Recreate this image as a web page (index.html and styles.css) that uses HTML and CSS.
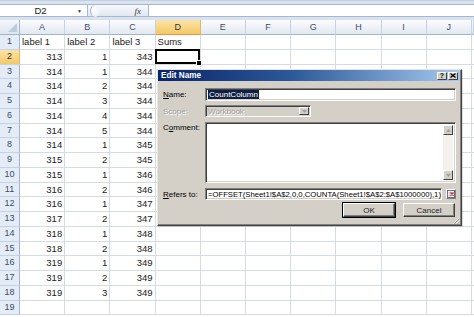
FILE: index.html
```html
<!DOCTYPE html>
<html>
<head>
<meta charset="utf-8">
<link rel="stylesheet" href="styles.css">
</head>
<body>
<div class="app">
  <div class="fbar">
    <div class="namebox"><span class="ref">D2</span><span class="dd">&#9660;</span></div>
    <div class="fxarea"><span class="knob"></span><span class="fx">fx</span></div>
    <div class="finput"></div>
  </div>
  <div class="sheet">
    <div class="row hdr"><div class="corner"><span class="tri"></span></div><div class="ch">A</div><div class="ch">B</div><div class="ch">C</div><div class="ch sel">D</div><div class="ch">E</div><div class="ch">F</div><div class="ch">G</div><div class="ch">H</div><div class="ch">I</div><div class="ch">J</div><div class="ch"></div></div>
    <div class="row"><div class="rh">1</div><div class="c">label 1</div><div class="c">label 2</div><div class="c">label 3</div><div class="c">Sums</div><div class="c"></div><div class="c"></div><div class="c"></div><div class="c"></div><div class="c"></div><div class="c"></div><div class="c"></div></div>
    <div class="row"><div class="rh sel">2</div><div class="c n">313</div><div class="c n">1</div><div class="c n">343</div><div class="c active"></div><div class="c"></div><div class="c"></div><div class="c"></div><div class="c"></div><div class="c"></div><div class="c"></div><div class="c"></div></div>
    <div class="row"><div class="rh">3</div><div class="c n">314</div><div class="c n">1</div><div class="c n">344</div><div class="c"></div><div class="c"></div><div class="c"></div><div class="c"></div><div class="c"></div><div class="c"></div><div class="c"></div><div class="c"></div></div>
    <div class="row"><div class="rh">4</div><div class="c n">314</div><div class="c n">2</div><div class="c n">344</div><div class="c"></div><div class="c"></div><div class="c"></div><div class="c"></div><div class="c"></div><div class="c"></div><div class="c"></div><div class="c"></div></div>
    <div class="row"><div class="rh">5</div><div class="c n">314</div><div class="c n">3</div><div class="c n">344</div><div class="c"></div><div class="c"></div><div class="c"></div><div class="c"></div><div class="c"></div><div class="c"></div><div class="c"></div><div class="c"></div></div>
    <div class="row"><div class="rh">6</div><div class="c n">314</div><div class="c n">4</div><div class="c n">344</div><div class="c"></div><div class="c"></div><div class="c"></div><div class="c"></div><div class="c"></div><div class="c"></div><div class="c"></div><div class="c"></div></div>
    <div class="row"><div class="rh">7</div><div class="c n">314</div><div class="c n">5</div><div class="c n">344</div><div class="c"></div><div class="c"></div><div class="c"></div><div class="c"></div><div class="c"></div><div class="c"></div><div class="c"></div><div class="c"></div></div>
    <div class="row"><div class="rh">8</div><div class="c n">314</div><div class="c n">1</div><div class="c n">345</div><div class="c"></div><div class="c"></div><div class="c"></div><div class="c"></div><div class="c"></div><div class="c"></div><div class="c"></div><div class="c"></div></div>
    <div class="row"><div class="rh">9</div><div class="c n">315</div><div class="c n">2</div><div class="c n">345</div><div class="c"></div><div class="c"></div><div class="c"></div><div class="c"></div><div class="c"></div><div class="c"></div><div class="c"></div><div class="c"></div></div>
    <div class="row"><div class="rh">10</div><div class="c n">315</div><div class="c n">1</div><div class="c n">346</div><div class="c"></div><div class="c"></div><div class="c"></div><div class="c"></div><div class="c"></div><div class="c"></div><div class="c"></div><div class="c"></div></div>
    <div class="row"><div class="rh">11</div><div class="c n">316</div><div class="c n">2</div><div class="c n">346</div><div class="c"></div><div class="c"></div><div class="c"></div><div class="c"></div><div class="c"></div><div class="c"></div><div class="c"></div><div class="c"></div></div>
    <div class="row"><div class="rh">12</div><div class="c n">316</div><div class="c n">1</div><div class="c n">347</div><div class="c"></div><div class="c"></div><div class="c"></div><div class="c"></div><div class="c"></div><div class="c"></div><div class="c"></div><div class="c"></div></div>
    <div class="row"><div class="rh">13</div><div class="c n">317</div><div class="c n">2</div><div class="c n">347</div><div class="c"></div><div class="c"></div><div class="c"></div><div class="c"></div><div class="c"></div><div class="c"></div><div class="c"></div><div class="c"></div></div>
    <div class="row"><div class="rh">14</div><div class="c n">318</div><div class="c n">1</div><div class="c n">348</div><div class="c"></div><div class="c"></div><div class="c"></div><div class="c"></div><div class="c"></div><div class="c"></div><div class="c"></div><div class="c"></div></div>
    <div class="row"><div class="rh">15</div><div class="c n">318</div><div class="c n">2</div><div class="c n">348</div><div class="c"></div><div class="c"></div><div class="c"></div><div class="c"></div><div class="c"></div><div class="c"></div><div class="c"></div><div class="c"></div></div>
    <div class="row"><div class="rh">16</div><div class="c n">319</div><div class="c n">1</div><div class="c n">349</div><div class="c"></div><div class="c"></div><div class="c"></div><div class="c"></div><div class="c"></div><div class="c"></div><div class="c"></div><div class="c"></div></div>
    <div class="row"><div class="rh">17</div><div class="c n">319</div><div class="c n">2</div><div class="c n">349</div><div class="c"></div><div class="c"></div><div class="c"></div><div class="c"></div><div class="c"></div><div class="c"></div><div class="c"></div><div class="c"></div></div>
    <div class="row"><div class="rh">18</div><div class="c n">319</div><div class="c n">3</div><div class="c n">349</div><div class="c"></div><div class="c"></div><div class="c"></div><div class="c"></div><div class="c"></div><div class="c"></div><div class="c"></div><div class="c"></div></div>
    <div class="row"><div class="rh">19</div><div class="c"></div><div class="c"></div><div class="c"></div><div class="c"></div><div class="c"></div><div class="c"></div><div class="c"></div><div class="c"></div><div class="c"></div><div class="c"></div><div class="c"></div></div>
  </div>

  <div class="dialog">
    <div class="title">
      <span class="ttext">Edit Name</span>
      <span class="tbtn help">?</span>
      <span class="tbtn close"><svg width="6" height="5" viewBox="0 0 6 5"><path d="M0.5 0.5L5.5 4.5M5.5 0.5L0.5 4.5" stroke="#000" stroke-width="1.3"/></svg></span>
    </div>
    <div class="body">
      <div class="frow r-name">
        <span class="lbl"><u>N</u>ame:</span>
        <div class="input name"><span class="hl">CountColumn</span></div>
      </div>
      <div class="frow r-scope">
        <span class="lbl dis">Scope:</span>
        <div class="input scope"><span class="distext">Workbook</span><span class="ddbtn"><svg width="5" height="3" viewBox="0 0 5 3"><path d="M0 0H5L2.5 3Z" fill="#a0a0a0"/></svg></span></div>
      </div>
      <div class="frow r-comment">
        <span class="lbl top">C<u>o</u>mment:</span>
        <div class="input comment">
          <div class="carea"></div>
          <div class="vscroll">
            <span class="sbtn"><svg width="5" height="3" viewBox="0 0 5 3"><path d="M0 3H5L2.5 0Z" fill="#a0a0a0"/></svg></span>
            <span class="strack"></span>
            <span class="sbtn"><svg width="5" height="3" viewBox="0 0 5 3"><path d="M0 0H5L2.5 3Z" fill="#a0a0a0"/></svg></span>
          </div>
        </div>
      </div>
      <div class="frow r-refers">
        <span class="lbl"><u>R</u>efers to:</span>
        <div class="input refers">=OFFSET(Sheet1!$A$2,0,0,COUNTA(Sheet1!$A$2:$A$1000000),1)</div>
        <span class="refbtn"><svg width="8" height="8" viewBox="0 0 8 8"><rect x="0.5" y="0.5" width="7" height="7" fill="#fff" stroke="#6a6a80"/><path d="M0.5 3H7.5M0.5 5.5H7.5M3 0.5V7.5" stroke="#9aa0b8" stroke-width="0.6"/><path d="M3.5 2.5L6.5 5.5M6.5 2.5L3.5 5.5" stroke="#d02020" stroke-width="1.4"/></svg></span>
      </div>
      <div class="brow">
        <span class="btn ok">OK</span>
        <span class="btn">Cancel</span>
      </div>
    </div>
    <span class="grip"><svg width="8" height="8" viewBox="0 0 8 8"><path d="M7.5 1.5L1.5 7.5M7.5 4.5L4.5 7.5" stroke="#fff" stroke-width="0.8"/><path d="M7.5 2.5L2.5 7.5M7.5 5.5L5.5 7.5" stroke="#808080" stroke-width="0.8"/></svg></span>
  </div>
</div>
</body>
</html>
```
FILE: styles.css
```css
html, body {
  margin: 0;
  padding: 0;
  background: #fff;
  overflow: hidden;
}
.app {
  position: relative;
  width: 474px;
  height: 317px;
  overflow: hidden;
  font-family: "Liberation Sans", Arial, sans-serif;
}

/* formula bar */
.fbar {
  height: 20px;
  box-sizing: border-box;
  padding: 3px 0;
  background: #d9e3f0;
  display: flex;
  border-top: 1px solid #c2d0e2;
}
.namebox {
  width: 88px;
  box-sizing: border-box;
  background: #fff;
  border: 1px solid #a7b8cd;
  border-left: none;
  display: flex;
  align-items: center;
  font-size: 9.5px;
  color: #222;
}
.ref { flex: 1; text-align: center; padding-left: 4px; }
.dd { font-size: 5px; width: 10px; color: #333; }
.fxarea {
  width: 60px;
  box-sizing: border-box;
  display: flex;
  align-items: center;
  background: linear-gradient(#f7f9fc, #e1e8f2);
  border-top: 1px solid #a7b8cd;
  border-bottom: 1px solid #a7b8cd;
}
.knob {
  width: 9px;
  height: 12px;
  margin-left: 2px;
  border-radius: 50%;
  border-left: 1.5px solid #9fb1c8;
  background: radial-gradient(circle at 30% 40%, #fff, #e4ebf4);
}
.fx {
  margin-left: auto;
  margin-right: 7px;
  font: italic 9px "Liberation Serif", serif;
  color: #333;
}
.finput {
  flex: 1;
  background: #fff;
  border: 1px solid #a7b8cd;
  border-right: none;
}

/* sheet */
.sheet {
  display: flex;
  flex-direction: column;
}
.row {
  display: grid;
  grid-template-columns: 20px repeat(10, 45.2px) 1fr;
  height: 14.75px;
  font-size: 9.5px;
  color: #222;
}
.row.hdr { height: 15px; }
.c {
  box-sizing: border-box;
  border-right: 1px solid #d5dbe3;
  border-bottom: 1px solid #d5dbe3;
  padding: 0 2px;
  line-height: 13.5px;
  white-space: nowrap;
  overflow: hidden;
}
.c.n { text-align: right; }
.c.active { position: relative; overflow: visible; }
.c.active::after {
  content: "";
  position: absolute;
  left: -1px;
  top: -1px;
  right: 0;
  bottom: 0;
  border: 2px solid #000;
}
.c.active::before {
  content: "";
  position: absolute;
  right: -2px;
  bottom: -2px;
  width: 4px;
  height: 4px;
  background: #000;
  border: 1px solid #fff;
  z-index: 1;
}
.corner {
  box-sizing: border-box;
  background: linear-gradient(#f4f7fb, #dde5f0);
  border-right: 1px solid #9eb6ce;
  border-bottom: 1px solid #9eb6ce;
  position: relative;
}
.tri {
  position: absolute;
  right: 2px;
  bottom: 2px;
  width: 0;
  height: 0;
  border-left: 9px solid transparent;
  border-bottom: 9px solid #c0cbd8;
}
.ch {
  box-sizing: border-box;
  background: linear-gradient(#fbfcfe, #e2e8f1);
  border-right: 1px solid #c5d2e1;
  border-bottom: 1px solid #9eb6ce;
  text-align: center;
  line-height: 14px;
  font-size: 9px;
  color: #3f4d61;
}
.ch.sel, .rh.sel {
  background: linear-gradient(#fbe3a8, #f4c966);
  border-right-color: #f0b44c;
  color: #333;
}
.ch.sel { border-bottom-color: #f29536; }
.rh {
  box-sizing: border-box;
  background: #e4ecf7;
  border-right: 1px solid #9eb6ce;
  border-bottom: 1px solid #c5d2e1;
  text-align: center;
  line-height: 13.5px;
  font-size: 9px;
  color: #3f4d61;
}

/* dialog */
.dialog {
  position: absolute;
  left: 157px;
  top: 69px;
  width: 305px;
  height: 157px;
  box-sizing: border-box;
  background: #d4d0c8;
  border: 1px solid;
  border-color: #e6e3dc #404040 #404040 #e6e3dc;
  box-shadow: inset -1px -1px 0 #808080, 1px 1px 0 rgba(0,0,0,0.12);
  font-size: 8px;
  color: #000;
  display: flex;
  flex-direction: column;
}
.title {
  height: 11px;
  margin-right: 1px;
  background: linear-gradient(90deg, #0a246a 0%, #2d5a9a 45%, #a6caf0 100%);
  display: flex;
  align-items: center;
  padding-left: 3px;
  padding-right: 2px;
  gap: 1px;
}
.ttext {
  color: #fff;
  font-weight: bold;
  font-size: 8.2px;
  margin-right: auto;
}
.tbtn {
  width: 10px;
  height: 8px;
  box-sizing: border-box;
  background: #d4d0c8;
  border: 1px solid;
  border-color: #fff #404040 #404040 #fff;
  display: flex;
  align-items: center;
  justify-content: center;
  font-size: 7px;
  font-weight: bold;
  line-height: 1;
}
.body {
  padding: 7px 5px 0 5px;
  display: flex;
  flex-direction: column;
}
.frow {
  display: flex;
  align-items: center;
}
.r-scope { margin-top: 4px; }
.r-comment { margin-top: 5px; align-items: flex-start; }
.r-refers { margin-top: 5px; }
.lbl {
  width: 42px;
  flex: none;
  white-space: nowrap;
}
.lbl.dis { color: #a0a0a0; text-shadow: 1px 1px 0 #fff; }
.lbl.top { padding-top: 1px; }
u { text-decoration-thickness: 0.6px; text-underline-offset: 1px; }
.input {
  box-sizing: border-box;
  background: #fff;
  border: 1px solid;
  border-color: #808080 #fff #fff #808080;
  box-shadow: inset 1px 1px 0 #404040, inset -1px -1px 0 #d4d0c8;
  display: flex;
  align-items: center;
  padding-left: 2px;
}
.input.name { width: 252px; height: 13px; }
.hl {
  background: #0f1f45;
  color: #fff;
  padding: 0 1px;
  line-height: 9px;
}
.input.scope {
  width: 106px;
  height: 12px;
  background: #d4d0c8;
  padding-right: 1px;
}
.distext { color: #a0a0a0; text-shadow: 1px 1px 0 #fff; margin-right: auto; }
.ddbtn {
  width: 10px;
  height: 8px;
  box-sizing: border-box;
  background: #d4d0c8;
  border: 1px solid;
  border-color: #fff #404040 #404040 #fff;
  display: flex;
  align-items: center;
  justify-content: center;
}
.input.comment {
  width: 251px;
  height: 61px;
  padding: 2px 2px 2px 2px;
  align-items: stretch;
}
.carea { flex: 1; }
.vscroll {
  width: 10px;
  display: flex;
  flex-direction: column;
}
.sbtn {
  height: 10px;
  box-sizing: border-box;
  background: #d4d0c8;
  border: 1px solid;
  border-color: #fff #404040 #404040 #fff;
  display: flex;
  align-items: center;
  justify-content: center;
}
.strack {
  flex: 1;
  background: #f2f1ec;
}
.input.refers {
  width: 238px;
  height: 12px;
  font-size: 7.7px;
  white-space: nowrap;
  overflow: hidden;
}
.refbtn {
  width: 10px;
  height: 10px;
  margin-left: 4px;
  display: flex;
  align-items: center;
  justify-content: center;
  box-sizing: border-box;
  border: 1px solid;
  border-color: #fff #808080 #808080 #fff;
}
.brow {
  margin-top: 3px;
  display: flex;
  justify-content: flex-end;
  gap: 8px;
  padding-right: 1px;
}
.btn {
  width: 52px;
  height: 14px;
  box-sizing: border-box;
  background: #d4d0c8;
  border: 1px solid;
  border-color: #fff #404040 #404040 #fff;
  box-shadow: inset -1px -1px 0 #808080;
  display: flex;
  align-items: center;
  justify-content: center;
  color: #222;
}
.btn.ok {
  outline: 1px solid #000;
  outline-offset: 0;
}
.grip {
  position: absolute;
  right: 1px;
  bottom: 1px;
  width: 8px;
  height: 8px;
  display: flex;
}
```
